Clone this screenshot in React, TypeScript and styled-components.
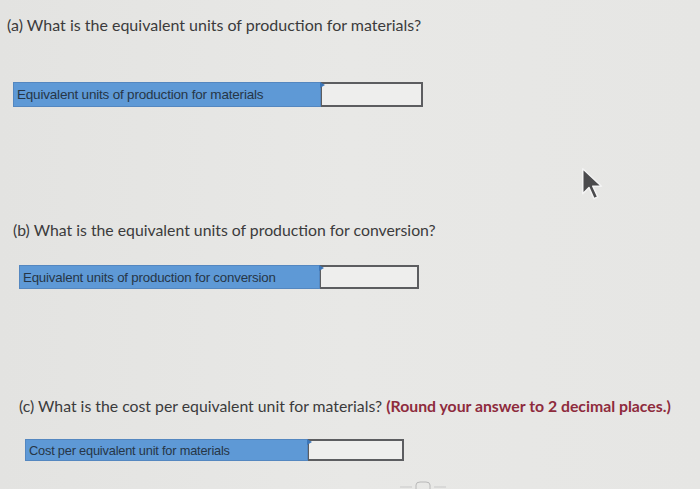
import React from "react";
import styled, { createGlobalStyle } from "styled-components";

const Global = createGlobalStyle`
  html, body { margin: 0; padding: 0; }
  body {
    width: 700px;
    height: 489px;
    overflow: hidden;
    background: linear-gradient(90deg, #e3e3e1 0%, #e8e8e6 50%, #e6e6e4 100%);
    font-family: Lato, "Open Sans", sans-serif;
  }
`;

const Page = styled.div`
  position: relative;
  width: 700px;
  height: 489px;
  display: flex;
  flex-direction: column;
`;

const Section = styled.section<{ $indent: number; $top: number; $gap: number }>`
  display: flex;
  flex-direction: column;
  align-items: flex-start;
  margin-top: ${(p) => p.$top}px;
  padding-left: ${(p) => p.$indent}px;
  gap: ${(p) => p.$gap}px;
`;

const Question = styled.p<{ $size: number }>`
  margin: 0;
  font-size: ${(p) => p.$size}px;
  line-height: 20px;
  color: #3b3b3c;
`;

const Emph = styled.strong`
  color: #8e2b3d;
  font-weight: 700;
`;

const Row = styled.div<{ $shift: number }>`
  display: flex;
  margin-left: ${(p) => p.$shift}px;
`;

const Label = styled.div<{ $w: number; $h: number; $fs: number }>`
  width: ${(p) => p.$w}px;
  height: ${(p) => p.$h}px;
  box-sizing: border-box;
  background: #5e99d6;
  border: 1px solid #5487c0;
  display: flex;
  align-items: center;
  padding-left: 3px;
  font-family: "Liberation Sans", Arial, sans-serif;
  font-size: ${(p) => p.$fs}px;
  color: #263647;
  letter-spacing: -0.2px;
`;

const Input = styled.div<{ $w: number; $h: number }>`
  position: relative;
  width: ${(p) => p.$w}px;
  height: ${(p) => p.$h}px;
  box-sizing: border-box;
  background: #eeeeed;
  border: 2px solid #5c5d60;
  border-left-width: 1.5px;
`;

const Marker = styled.span`
  position: absolute;
  left: -2px;
  top: -2px;
  width: 0;
  height: 0;
  border-top: 3px solid transparent;
  border-bottom: 3px solid transparent;
  border-left: 5px solid #3c76b8;
`;

const Cursor = styled.svg`
  position: absolute;
  left: 579px;
  top: 166px;
`;

const Faint = styled.svg`
  position: absolute;
  left: 398px;
  top: 480px;
`;

function Field({ label, lw, iw, h, fs }: { label: string; lw: number; iw: number; h: number; fs: number }) {
  return (
    <>
      <Label $w={lw} $h={h} $fs={fs}>{label}</Label>
      <Input $w={iw} $h={h}>
        <Marker />
      </Input>
    </>
  );
}

export default function App() {
  return (
    <>
      <Global />
      <Page>
        <Section $indent={7} $top={15} $gap={47}>
          <Question $size={16}>(a) What is the equivalent units of production for materials?</Question>
          <Row $shift={6}>
            <Field label="Equivalent units of production for materials" lw={308} iw={102} h={25} fs={13.5} />
          </Row>
        </Section>
        <Section $indent={13} $top={113} $gap={25}>
          <Question $size={15.8}>(b) What is the equivalent units of production for conversion?</Question>
          <Row $shift={6}>
            <Field label="Equivalent units of production for conversion" lw={301} iw={99} h={24} fs={13.3} />
          </Row>
        </Section>
        <Section $indent={19} $top={107} $gap={23}>
          <Question $size={15.8}>
            (c) What is the cost per equivalent unit for materials? <Emph>(Round your answer to 2 decimal places.)</Emph>
          </Question>
          <Row $shift={6}>
            <Field label="Cost per equivalent unit for materials" lw={283} iw={96} h={22} fs={12.8} />
          </Row>
        </Section>
        <Cursor width="30" height="38" viewBox="0 0 24 30">
          <path
            d="M3 2 L3 22 L8 17 L12 26 L15 24.5 L11 16 L18 16 Z"
            fill="#4b4b4d"
            stroke="#f4f4f4"
            strokeWidth="1.2"
            strokeLinejoin="round"
          />
        </Cursor>
        <Faint width="50" height="9" viewBox="0 0 50 9">
          <path d="M2 7 H14 M36 7 H48" stroke="#c9c9c9" strokeWidth="1" />
          <path d="M18 9 V5 Q18 2 22 2 H28 Q32 2 32 5 V9" stroke="#b8b8b8" strokeWidth="1" fill="none" />
        </Faint>
      </Page>
    </>
  );
}
